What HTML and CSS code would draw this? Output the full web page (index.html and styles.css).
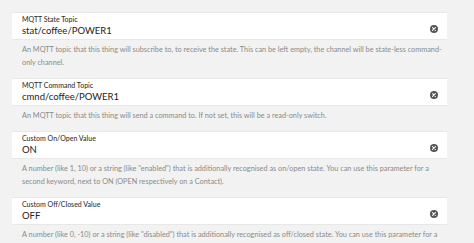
FILE: index.html
```html
<!DOCTYPE html>
<html>
<head>
<meta charset="utf-8">
<link rel="stylesheet" href="styles.css">
</head>
<body>
<div class="page">
  <div class="field">
    <div class="box">
      <div class="inputs">
        <div class="label">MQTT State Topic</div>
        <div class="value">stat/coffee/POWER1</div>
      </div>
      <svg class="clear" viewBox="0 0 10 10"><circle cx="5" cy="5" r="5" fill="#555"/><path d="M3.2 3.2 L6.8 6.8 M6.8 3.2 L3.2 6.8" stroke="#fff" stroke-width="1.4" stroke-linecap="round"/></svg>
    </div>
    <div class="desc">An MQTT topic that this thing will subscribe to, to receive the state. This can be left empty, the channel will be state-less command-<br>only channel.</div>
  </div>
  <div class="field">
    <div class="box">
      <div class="inputs">
        <div class="label">MQTT Command Topic</div>
        <div class="value">cmnd/coffee/POWER1</div>
      </div>
      <svg class="clear" viewBox="0 0 10 10"><circle cx="5" cy="5" r="5" fill="#555"/><path d="M3.2 3.2 L6.8 6.8 M6.8 3.2 L3.2 6.8" stroke="#fff" stroke-width="1.4" stroke-linecap="round"/></svg>
    </div>
    <div class="desc">An MQTT topic that this thing will send a command to. If not set, this will be a read-only switch.</div>
  </div>
  <div class="field">
    <div class="box">
      <div class="inputs">
        <div class="label">Custom On/Open Value</div>
        <div class="value">ON</div>
      </div>
      <svg class="clear" viewBox="0 0 10 10"><circle cx="5" cy="5" r="5" fill="#555"/><path d="M3.2 3.2 L6.8 6.8 M6.8 3.2 L3.2 6.8" stroke="#fff" stroke-width="1.4" stroke-linecap="round"/></svg>
    </div>
    <div class="desc">A number (like 1, 10) or a string (like "enabled") that is additionally recognised as on/open state. You can use this parameter for a<br>second keyword, next to ON (OPEN respectively on a Contact).</div>
  </div>
  <div class="field">
    <div class="box">
      <div class="inputs">
        <div class="label">Custom Off/Closed Value</div>
        <div class="value">OFF</div>
      </div>
      <svg class="clear" viewBox="0 0 10 10"><circle cx="5" cy="5" r="5" fill="#555"/><path d="M3.2 3.2 L6.8 6.8 M6.8 3.2 L3.2 6.8" stroke="#fff" stroke-width="1.4" stroke-linecap="round"/></svg>
    </div>
    <div class="desc">A number (like 0, -10) or a string (like "disabled") that is additionally recognised as off/closed state. You can use this parameter for a<br>second keyword, next to OFF (CLOSED respectively on a Contact).</div>
  </div>
</div>
</body>
</html>
```
FILE: styles.css
```css
html, body {
  margin: 0;
  padding: 0;
  background: #f2f2f2;
  overflow: hidden;
  height: 243px;
}
.page {
  padding: 12px 27px 0 12px;
  font-family: Lato, "Open Sans", sans-serif;
}
.field {
  margin-bottom: 9px;
}
.box {
  background: #fff;
  border-top: 1px solid #e8e8e8;
  border-bottom: 1px solid #e8e8e8;
  height: 28px;
  box-sizing: border-box;
  padding: 3px 9px 2px 10px;
  display: flex;
  align-items: flex-end;
}
.inputs {
  flex: 1;
}
.label {
  font-size: 7px;
  line-height: 9px;
  color: #333;
  font-weight: 500;
}
.value {
  font-size: 9.5px;
  line-height: 13px;
  color: #222;
}
.clear {
  width: 8px;
  height: 8px;
  margin-bottom: 4px;
}
.desc {
  padding: 3px 0 0 10px;
  font-size: 7.3px;
  line-height: 13px;
  color: #8a8a8a;
  white-space: nowrap;
}
```
